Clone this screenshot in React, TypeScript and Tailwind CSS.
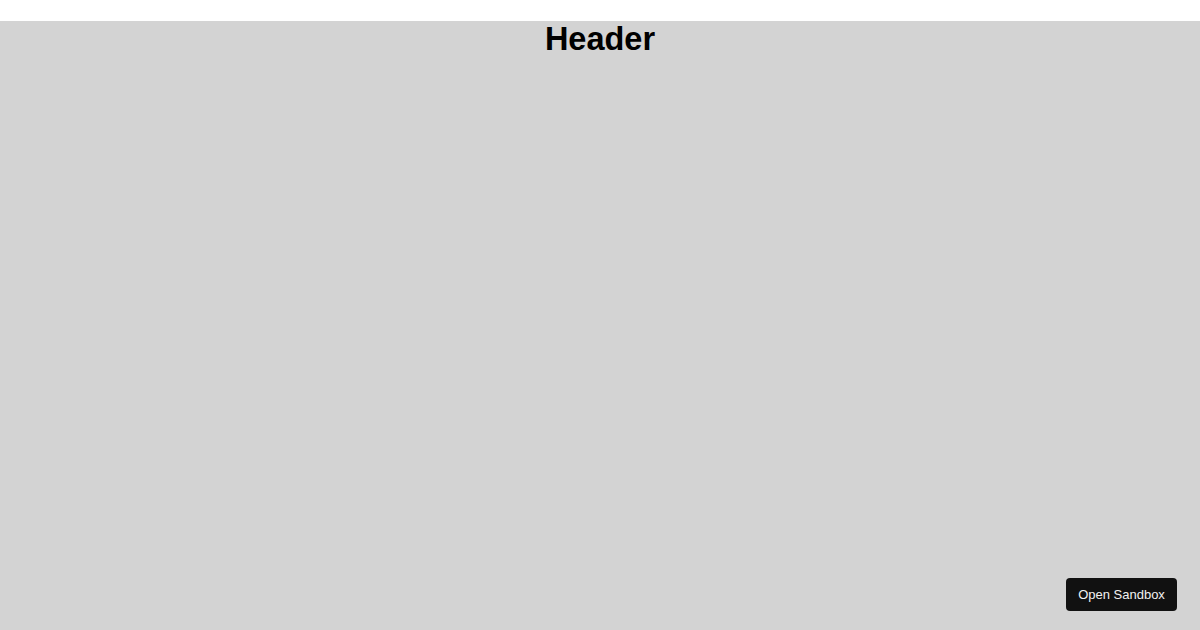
export default function App() {
  return (
    <div className="relative h-[630px] w-full bg-white pt-[21px] font-['Liberation_Sans',Arial,sans-serif]">
      <div className="h-[609px] bg-[#d3d3d3]">
        <h1 className="text-center text-[32.5px] font-bold leading-[37px] text-black">Header</h1>
      </div>
      <button className="absolute bottom-[19px] right-[23px] flex h-[33px] w-[111px] items-center justify-center rounded-[4px] bg-[#111111] text-[13px] text-[#f2f2f2]">
        Open Sandbox
      </button>
    </div>
  );
}
